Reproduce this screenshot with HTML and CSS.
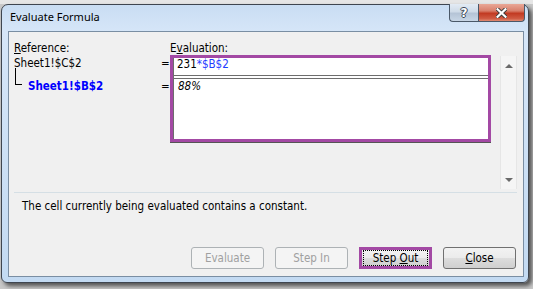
FILE: index.html
```html
<!DOCTYPE html>
<html>
<head>
<meta charset="utf-8">
<link rel="stylesheet" href="styles.css">
</head>
<body>
<div class="screen">
  <div class="window">
    <div class="titlebar">
      <div class="title">Evaluate Formula</div>
      <div class="caption-btns">
        <div class="cbtn help"><span>?</span></div>
        <div class="cbtn close">
          <svg width="11" height="10" viewBox="0 0 11 10">
            <path d="M1.5 1.2 L9.5 8.8 M9.5 1.2 L1.5 8.8" stroke="#3b3b3b" stroke-width="4" stroke-linecap="square" fill="none"/>
            <path d="M1.5 1.2 L9.5 8.8 M9.5 1.2 L1.5 8.8" stroke="#ffffff" stroke-width="2.2" stroke-linecap="square" fill="none"/>
          </svg>
        </div>
      </div>
    </div>
    <div class="client">
      <div class="main">
        <div class="refcol">
          <div class="label"><u>R</u>eference:</div>
          <div class="ref1">Sheet1!$C$2</div>
          <div class="ref2"><span class="tree"></span><span class="refb">Sheet1!$B$2</span></div>
        </div>
        <div class="eqcol">
          <div class="eq1">=</div>
          <div class="eq2">=</div>
        </div>
        <div class="evalcol">
          <div class="label">E<u>v</u>aluation:</div>
          <div class="evalbox">
            <div class="row1">231<span class="blue">*$B$2</span></div>
            <div class="dbl"></div>
            <div class="row2"><i>88%</i></div>
          </div>
        </div>
        <div class="scroll">
          <span class="arrow up"></span>
          <span class="arrow down"></span>
        </div>
      </div>
      <div class="sep"></div>
      <div class="status">The cell currently being evaluated contains a constant.</div>
      <div class="buttons">
        <div class="btn disabled"><span>Evaluate</span></div>
        <div class="btn disabled"><span>Step In</span></div>
        <div class="btn focus"><div class="focusrect"><span>Step <u>O</u>ut</span></div></div>
        <div class="btn"><span><u>C</u>lose</span></div>
      </div>
    </div>
  </div>
</div>
</body>
</html>
```
FILE: styles.css
```css
html, body {
  margin: 0;
  padding: 0;
}
body {
  width: 533px;
  height: 289px;
  overflow: hidden;
  background: linear-gradient(to bottom, #e6e6e6 0px, #e6e6e6 4px, #c8c8c8 4px, #c8c8c8 100%);
  font-family: "DejaVu Sans Condensed", "Liberation Sans", sans-serif;
  font-size: 11.5px;
  color: #000;
}
.screen {
  padding: 4px 0 0 1px;
}
.window {
  width: 528px;
  height: 279px;
  box-sizing: border-box;
  border: 1px solid #3f4650;
  border-radius: 7px 7px 6px 6px;
  background: linear-gradient(to bottom, #c9ddf3 0%, #d6e6f8 10%, #c3daf2 100%);
  box-shadow: 3px 3px 4px rgba(0, 0, 0, 0.6);
  display: flex;
  flex-direction: column;
}
.titlebar {
  height: 26px;
  display: flex;
  justify-content: space-between;
  align-items: flex-start;
  flex: none;
}
.title {
  font-family: "Noto Sans", "Open Sans", sans-serif;
  font-size: 11px;
  line-height: 16px;
  padding: 4px 0 0 8px;
  color: #000;
}
.caption-btns {
  display: flex;
  margin-top: -1px;
  margin-right: 3px;
}
.cbtn {
  height: 18px;
  box-sizing: border-box;
  border: 1px solid #4a5868;
  border-top: none;
  display: flex;
  align-items: center;
  justify-content: center;
}
.help {
  width: 29px;
  border-right: none;
  border-radius: 0 0 0 4px;
  background: linear-gradient(to bottom, #e3ebf4 0%, #cfdbe8 45%, #b5c4d6 55%, #c8d6e6 100%);
}
.help span {
  font-family: "DejaVu Sans", sans-serif;
  font-weight: bold;
  font-size: 12px;
  line-height: 12px;
  color: #fff;
  text-shadow: -1px 0 0 #3c4756, 1px 0 0 #3c4756, 0 -1px 0 #3c4756, 0 1px 0 #3c4756;
  margin-top: 1px;
}
.close {
  width: 47px;
  border-radius: 0 0 4px 0;
  background: linear-gradient(to bottom, #e9a796 0%, #d9806c 40%, #c23a22 55%, #cf5a42 85%, #e08a72 100%);
}
.close svg {
  display: block;
  margin-top: 1px;
}
.client {
  flex: none;
  height: 246px;
  margin: 0 4px 0 6px;
  box-sizing: border-box;
  border: 1px solid #7a8ea3;
  background: #f0f0f0;
  display: flex;
  flex-direction: column;
}
.main {
  display: flex;
  align-items: flex-start;
  padding: 10px 0 0 5px;
  height: 157px;
  box-sizing: border-box;
  line-height: 13px;
}
.refcol {
  width: 147px;
  flex: none;
}
.label {
  height: 13px;
}
.ref1 {
  margin-top: 2px;
}
.ref2 {
  margin-top: 10px;
  display: flex;
  align-items: flex-start;
}
.tree {
  width: 7px;
  height: 17px;
  margin-top: -12px;
  margin-left: 1px;
  box-sizing: border-box;
  border-left: 1px solid #000;
  border-bottom: 1px solid #000;
  flex: none;
}
.refb {
  margin-left: 6px;
  font-weight: bold;
  color: #0000ff;
}
.eqcol {
  width: 9px;
  flex: none;
  padding-top: 13px;
}
.eq1 {
  margin-top: 2px;
}
.eq2 {
  margin-top: 10px;
}
.evalcol {
  width: 321px;
  flex: none;
}
.evalbox {
  height: 87px;
  box-sizing: border-box;
  border: 3px solid #a349a4;
  background: #fff;
  box-shadow: 0 1px 0 #555, inset 1px 0 0 #6d6d6d;
}
.row1 {
  box-sizing: border-box;
  padding-left: 4px;
  border-bottom: 1px solid #6d6d6d;
  height: 18px;
}
.blue {
  color: #1f3cff;
}
.dbl {
  height: 3px;
  box-sizing: border-box;
  border-bottom: 1px solid #6d6d6d;
}
.row2 {
  padding: 1px 0 0 5px;
}
.scroll {
  width: 17px;
  height: 133px;
  margin: 14px 0 0 9px;
  box-sizing: border-box;
  background: #f5f5f5;
  border-left: 1px solid #e6e6e6;
  border-right: 1px solid #e6e6e6;
  display: flex;
  flex-direction: column;
  justify-content: space-between;
  align-items: center;
  padding: 8px 0 7px;
  flex: none;
}
.arrow {
  width: 0;
  height: 0;
  border-left: 4px solid transparent;
  border-right: 4px solid transparent;
}
.up {
  border-bottom: 4px solid #6a6a6a;
}
.down {
  border-top: 4px solid #6a6a6a;
}
.sep {
  height: 1px;
  width: 503px;
  margin: 3px 0 0 5px;
  background: #d5dfe5;
}
.status {
  margin-top: 7px;
  padding-left: 13px;
  line-height: 13px;
}
.buttons {
  margin-top: 34px;
  display: flex;
  justify-content: flex-end;
  gap: 11px;
  padding-right: 7px;
}
.btn {
  width: 73px;
  height: 22px;
  box-sizing: border-box;
  border: 1px solid #707070;
  border-radius: 3px;
  background: linear-gradient(to bottom, #f2f2f2 0%, #ebebeb 50%, #dddddd 50%, #cfcfcf 100%);
  display: flex;
  align-items: center;
  justify-content: center;
  line-height: 13px;
}
.btn.disabled {
  border-color: #adb2b5;
  background: #f4f4f4;
  color: #a0a0a0;
}
.btn.focus {
  border: 3px solid #a349a4;
  border-radius: 0;
  padding: 0;
}
.focusrect {
  flex: 1;
  align-self: stretch;
  display: flex;
  align-items: center;
  justify-content: center;
  border: 1px dotted #000;
  margin: 0 1px;
}
```
